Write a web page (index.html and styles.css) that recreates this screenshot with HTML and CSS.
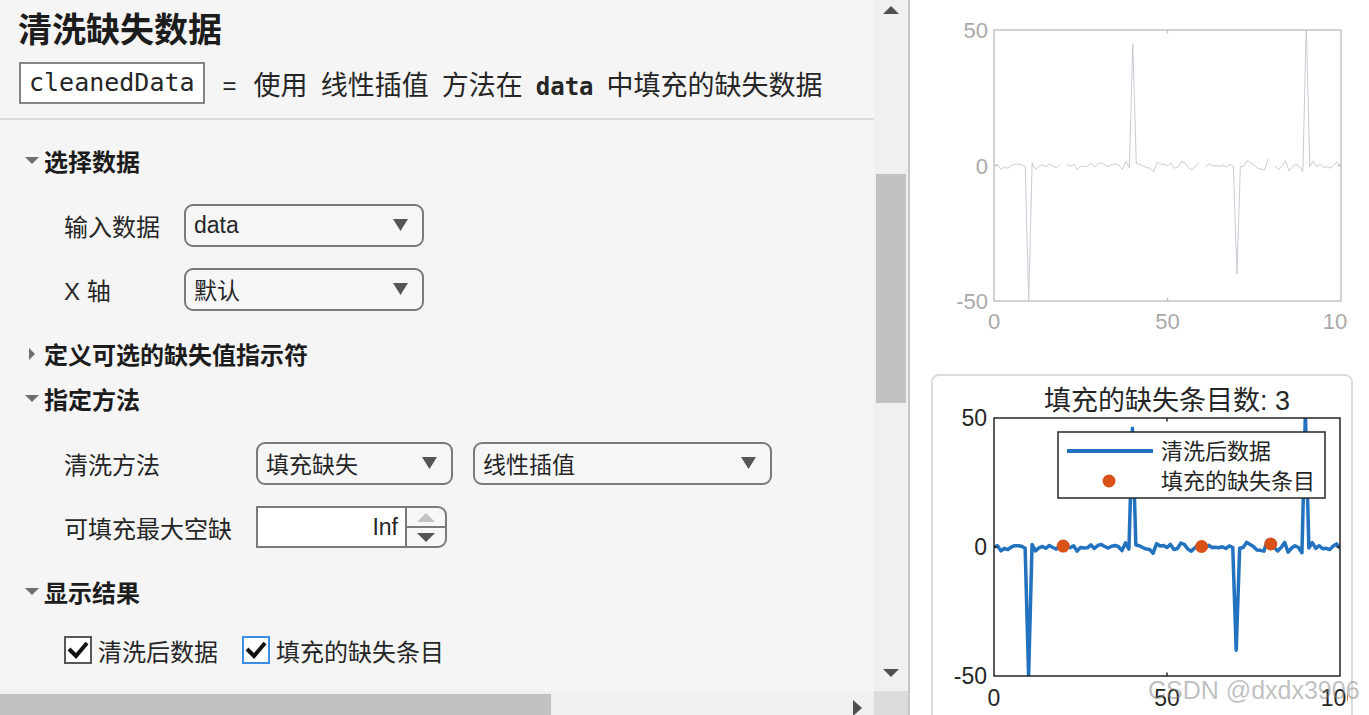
FILE: index.html
```html
<!DOCTYPE html>
<html lang="zh">
<head>
<meta charset="utf-8">
<title>清洗缺失数据</title>
<link rel="stylesheet" href="styles.css">
</head>
<body>
<div class="app">
  <div class="editor">
    <div class="editor-main">
      <div class="content">
        <div class="header">
          <h1 class="title">清洗缺失数据</h1>
          <div class="summary">
            <span class="var-box">cleanedData</span>
            <span class="eq">=</span>
            <span class="sum-text">使用 线性插值 方法在 <b class="code">data</b> 中填充的缺失数据</span>
          </div>
        </div>
        <div class="sections">
          <section class="sec">
            <div class="sec-head"><span class="tri-down"></span>选择数据</div>
            <div class="sec-body">
              <div class="row">
                <span class="label label-a">输入数据</span>
                <div class="dd dd-240"><span>data</span><svg class="dd-arrow" width="15" height="12" viewBox="0 0 15 12"><polygon points="0,0 15,0 7.5,12"/></svg></div>
              </div>
              <div class="row">
                <span class="label label-a">X 轴</span>
                <div class="dd dd-240"><span>默认</span><svg class="dd-arrow" width="15" height="12" viewBox="0 0 15 12"><polygon points="0,0 15,0 7.5,12"/></svg></div>
              </div>
            </div>
          </section>
          <section class="sec">
            <div class="sec-head"><span class="tri-right"></span>定义可选的缺失值指示符</div>
          </section>
          <section class="sec">
            <div class="sec-head"><span class="tri-down"></span>指定方法</div>
            <div class="sec-body">
              <div class="row">
                <span class="label label-b">清洗方法</span>
                <div class="dd dd-197"><span>填充缺失</span><svg class="dd-arrow" width="15" height="12" viewBox="0 0 15 12"><polygon points="0,0 15,0 7.5,12"/></svg></div>
                <div class="dd dd-299"><span>线性插值</span><svg class="dd-arrow" width="15" height="12" viewBox="0 0 15 12"><polygon points="0,0 15,0 7.5,12"/></svg></div>
              </div>
              <div class="row">
                <span class="label label-b">可填充最大空缺</span>
                <div class="spin">
                  <div class="spin-field">Inf</div>
                  <div class="spin-btns">
                    <div class="spin-btn"><svg width="18" height="9" viewBox="0 0 18 9"><polygon points="0,9 18,9 9,0" class="arrow-off"/></svg></div>
                    <div class="spin-btn spin-btn-down"><svg width="18" height="9" viewBox="0 0 18 9"><polygon points="0,0 18,0 9,9" class="arrow-on"/></svg></div>
                  </div>
                </div>
              </div>
            </div>
          </section>
          <section class="sec">
            <div class="sec-head"><span class="tri-down"></span>显示结果</div>
            <div class="sec-body">
              <div class="row row-cb">
                <span class="cb"><svg width="24" height="24" viewBox="0 0 24 24"><path d="M3 11 L10 18 L21 5" /></svg></span>
                <span class="cb-label">清洗后数据</span>
                <span class="cb cb-focus"><svg width="24" height="24" viewBox="0 0 24 24"><path d="M3 11 L10 18 L21 5" /></svg></span>
                <span class="cb-label">填充的缺失条目</span>
              </div>
            </div>
          </section>
        </div>
      </div>
      <div class="vscroll">
        <div class="vs-up"><svg width="16" height="8" viewBox="0 0 16 8"><polygon points="0,8 16,8 8,0"/></svg></div>
        <div class="vs-thumb"></div>
        <div class="vs-fill"></div>
        <div class="vs-down"><svg width="16" height="8" viewBox="0 0 16 8"><polygon points="0,0 16,0 8,8"/></svg></div>
      </div>
    </div>
    <div class="editor-bottom">
      <div class="hscroll">
        <div class="hs-thumb"></div>
        <div class="hs-fill"></div>
        <div class="hs-right"><svg width="9" height="16" viewBox="0 0 9 16"><polygon points="0,0 9,8 0,16"/></svg></div>
      </div>
      <div class="corner"></div>
    </div>
  </div>
  <div class="divider"></div>
  <div class="figure">
    <svg class="plot-top" width="438" height="340" viewBox="0 0 438 340">
      <svg x="84" y="30" width="347" height="271" viewBox="0 -50 100 100" preserveAspectRatio="none">
        <g fill="none" stroke="#c6ccd4" stroke-width="1">
          <polyline vector-effect="non-scaling-stroke" points="0,0 1,-0.5 2,1.5 3,0.5 4,1 5,0 6,-0.5 7,-0.5 8,-0.3 9,0.5 10,50 11,-1 12,1.5 13,0.3 14,-0.2 15,0.5 16,-0.6 17,0.2 18,0.8 19,-0.3"/>
          <polyline vector-effect="non-scaling-stroke" points="21,-0.4 22,0.3 23,-0.5 24,1.6 25,0.2 26,0.4 27,0.3 28,-0.8 29,0.6 30,-0.6 31,-1 32,-0.2 33,0.4 34,-0.3 35,-0.6 36,-0.1 37,1.4 38,-1.6 39,0.8 40,-45 41,-0.8 42,-0.5 43,0.2 44,0.8 45,1 46,2.4 47,-1.3 48,-0.4 49,-0.6 50,0.2 51,-1 52,1 53,0.6 54,-1.5 55,-1 56,0.8 57,1.6 58,0.4 59,-0.9"/>
          <polyline vector-effect="non-scaling-stroke" points="61,0.5 62,-0.7 63,0.2 64,0.1 65,0.3 66,-0.1 67,0.6 68,-0.4 69,0.2 70,40 71,0.5 72,0.2 73,-1.8 74,-1 75,-0.2 76,1.2 77,1.3 78,1.6 79,-2.5"/>
          <polyline vector-effect="non-scaling-stroke" points="81,0.2 82,1.5 83,0.2 84,-1.8 85,2 86,0.4 87,-0.5 88,0.2 89,2.2 90,-52 91,0.4 92,-1.7 93,0.5 94,-0.5 95,0.7 96,0.5 97,1 98,-0.3 99,-1.2 100,0.5"/>
        </g>
      </svg>
      <rect x="84" y="30" width="347" height="271" fill="none" stroke="#c4c4c4" stroke-width="1.5"/>
      <g stroke="#c4c4c4" stroke-width="1.5">
        <line x1="257.5" y1="30" x2="257.5" y2="33.5"/>
        <line x1="257.5" y1="301" x2="257.5" y2="297.5"/>
        <line x1="84" y1="165.5" x2="87.5" y2="165.5"/>
        <line x1="431" y1="165.5" x2="427.5" y2="165.5"/>
      </g>
      <g class="tick-top" text-anchor="end">
        <text x="78" y="38">50</text>
        <text x="78" y="173.5">0</text>
        <text x="78" y="309">-50</text>
      </g>
      <g class="tick-top" text-anchor="middle">
        <text x="84" y="329">0</text>
        <text x="257.5" y="329">50</text>
        <text x="431" y="329">100</text>
      </g>
    </svg>
    <div class="plot-card">
      <svg class="plot-bottom" width="415" height="340" viewBox="0 0 415 340">
        <text class="plot-title" x="234" y="34" text-anchor="middle">填充的缺失条目数: 3</text>
        <svg x="61" y="42" width="346" height="258" viewBox="0 -50 100 100" preserveAspectRatio="none">
          <polyline fill="none" stroke="#2372bf" stroke-width="3.5" stroke-linejoin="round" vector-effect="non-scaling-stroke" points="0,0 1,-0.5 2,1.5 3,0.5 4,1 5,0 6,-0.5 7,-0.5 8,-0.3 9,0.5 10,50 11,-1 12,1.5 13,0.3 14,-0.2 15,0.5 16,-0.6 17,0.2 18,0.8 19,-0.3 20,-0.35 21,-0.4 22,0.3 23,-0.5 24,1.6 25,0.2 26,0.4 27,0.3 28,-0.8 29,0.6 30,-0.6 31,-1 32,-0.2 33,0.4 34,-0.3 35,-0.6 36,-0.1 37,1.4 38,-1.6 39,0.8 40,-46 41,-0.8 42,-0.5 43,0.2 44,0.8 45,1 46,2.4 47,-1.3 48,-0.4 49,-0.6 50,0.2 51,-1 52,1 53,0.6 54,-1.5 55,-1 56,0.8 57,1.6 58,0.4 59,-0.9 60,-0.2 61,0.5 62,-0.7 63,0.2 64,0.1 65,0.3 66,-0.1 67,0.6 68,-0.4 69,0.2 70,40 71,0.5 72,0.2 73,-1.8 74,-1 75,-0.2 76,1.2 77,1.3 78,1.6 79,-2.5 80,-1.15 81,0.2 82,1.5 83,0.2 84,-1.8 85,2 86,0.4 87,-0.5 88,0.2 89,2.2 90,-52 91,0.4 92,-1.7 93,0.5 94,-0.5 95,0.7 96,0.5 97,1 98,-0.3 99,-1.2 100,0.5"/>
        </svg>
        <g fill="#d95319">
          <circle cx="130.2" cy="170.1" r="6.5"/>
          <circle cx="268.6" cy="170.5" r="6.5"/>
          <circle cx="337.8" cy="168" r="6.5"/>
        </g>
        <rect x="61" y="42" width="346" height="258" fill="none" stroke="#262626" stroke-width="1.5"/>
        <g stroke="#262626" stroke-width="1.5">
          <line x1="234" y1="42" x2="234" y2="45.5"/>
          <line x1="234" y1="300" x2="234" y2="296.5"/>
          <line x1="61" y1="171" x2="64.5" y2="171"/>
          <line x1="407" y1="171" x2="403.5" y2="171"/>
        </g>
        <rect x="125" y="56" width="267" height="66" fill="#ffffff" stroke="#262626" stroke-width="1.5"/>
        <line x1="134" y1="75" x2="220" y2="75" stroke="#2372bf" stroke-width="4"/>
        <circle cx="176" cy="105" r="6.5" fill="#d95319"/>
        <g class="legend-text">
          <text x="228" y="83">清洗后数据</text>
          <text x="228" y="113">填充的缺失条目</text>
        </g>
        <g class="tick-bottom" text-anchor="end">
          <text x="54" y="50">50</text>
          <text x="54" y="179">0</text>
          <text x="54" y="308">-50</text>
        </g>
        <g class="tick-bottom" text-anchor="middle">
          <text x="61" y="330">0</text>
          <text x="234" y="330">50</text>
          <text x="407" y="330">100</text>
        </g>
      </svg>
    </div>
    <div class="watermark">CSDN @dxdx3906</div>
  </div>
</div>
</body>
</html>
```

FILE: styles.css
```css
* { box-sizing: border-box; }
html, body { margin: 0; padding: 0; }
body {
  width: 1369px;
  height: 715px;
  overflow: hidden;
  font-family: "Liberation Sans", "Noto Sans CJK SC", sans-serif;
  color: #262626;
  background: #ffffff;
}
.app { display: flex; width: 1369px; height: 715px; }

.editor { width: 908px; height: 715px; display: flex; flex-direction: column; }
.editor-main { display: flex; height: 691px; }
.content { width: 874px; height: 691px; background: #f5f5f5; overflow: hidden; }

.header {
  height: 120px;
  padding: 8px 18px 0;
  border-bottom: 2px solid #dadada;
}
.title {
  margin: 0;
  font-family: "Noto Sans CJK SC", sans-serif;
  font-size: 34px;
  font-weight: 700;
  line-height: 40px;
  color: #1c1c1c;
}
.summary { display: flex; align-items: center; margin-top: 13px; margin-left: 1px; }
.var-box {
  height: 42px;
  padding: 0 8px;
  border: 2px solid #858585;
  background: #ffffff;
  font-family: "DejaVu Sans Mono", monospace;
  font-size: 25px;
  line-height: 38px;
  color: #262626;
}
.eq { font-size: 24px; margin: 6px 17px 0 18px; color: #262626; }
.sum-text {
  font-family: "Noto Sans CJK SC", sans-serif;
  font-size: 27px;
  line-height: 34px;
  word-spacing: 7px;
  margin-top: 6px;
  color: #262626;
}
.code { font-family: "DejaVu Sans Mono", monospace; font-weight: 700; font-size: 24px; word-spacing: 0; }

.sections { padding-top: 18px; }
.sec-head {
  height: 45px;
  display: flex;
  align-items: center;
  padding-left: 25px;
  font-family: "Noto Sans CJK SC", sans-serif;
  font-size: 24px;
  font-weight: 700;
  color: #1c1c1c;
}
.tri-down {
  width: 0; height: 0;
  border-left: 7px solid transparent;
  border-right: 7px solid transparent;
  border-top: 7px solid #6e6e6e;
  margin-right: 5px;
}
.tri-right {
  width: 0; height: 0;
  border-top: 6px solid transparent;
  border-bottom: 6px solid transparent;
  border-left: 6px solid #6e6e6e;
  margin-left: 4px;
  margin-right: 9px;
}
.sec-body { padding: 10px 0; }
.row { height: 64px; display: flex; align-items: center; padding-left: 64px; }
.label { font-size: 24px; color: #262626; }
.label-a { width: 120px; }
.label-b { width: 192px; }

.dd {
  height: 43px;
  border: 2px solid #7a7a7a;
  border-radius: 9px;
  display: flex;
  align-items: center;
  justify-content: space-between;
  padding: 0 14px 0 8px;
  font-size: 23px;
  color: #262626;
  background: #f6f6f6;
}
.dd-240 { width: 240px; }
.dd-197 { width: 197px; }
.dd-299 { width: 299px; margin-left: 20px; }
.dd-arrow { fill: #555555; flex: none; }

.spin { display: flex; width: 191px; height: 42px; }
.spin-field {
  flex: 1;
  background: #ffffff;
  border: 2px solid #7a7a7a;
  border-right: none;
  text-align: right;
  padding-right: 7px;
  font-size: 23px;
  line-height: 38px;
  color: #262626;
}
.spin-btns {
  width: 42px;
  border: 2px solid #7a7a7a;
  border-radius: 0 9px 9px 0;
  display: flex;
  flex-direction: column;
  background: #f7f7f7;
}
.spin-btn { flex: 1; display: flex; align-items: center; justify-content: center; }
.spin-btn-down { border-top: 2px solid #7a7a7a; }
.arrow-off { fill: #c4c4c4; }
.arrow-on { fill: #555555; }

.row-cb { height: 52px; }
.cb {
  width: 28px; height: 28px;
  border: 2px solid #575757;
  background: #ffffff;
  display: flex; align-items: center; justify-content: center;
}
.cb svg path { fill: none; stroke: #111111; stroke-width: 4; stroke-linejoin: miter; }
.cb-focus { border-color: #3b8ee4; margin-left: 24px; }
.cb-label { font-size: 24px; margin-left: 6px; color: #262626; }

.vscroll { width: 34px; height: 691px; background: #f0f0f0; display: flex; flex-direction: column; align-items: center; }
.vs-up { height: 20px; padding-top: 6px; }
.vs-up svg, .vs-down svg, .hs-right svg { display: block; fill: #505050; }
.vs-thumb { width: 30px; height: 229px; margin-top: 154px; background: #c1c1c1; }
.vs-fill { flex: 1; }
.vs-down { height: 22px; padding-bottom: 14px; }

.editor-bottom { display: flex; height: 24px; }
.hscroll { width: 874px; height: 24px; background: #f0f0f0; display: flex; }
.hs-thumb { width: 551px; height: 21px; margin-top: 3px; background: #c1c1c1; }
.hs-fill { flex: 1; }
.hs-right { width: 21px; padding-top: 9px; }
.corner { width: 34px; height: 24px; background: #dcdcdc; }

.divider { width: 2px; height: 715px; background: #c6c6c6; }

.figure { position: relative; flex: 1; height: 715px; background: #ffffff; overflow: hidden; }
.plot-top { display: block; }
.tick-top { font-family: "Liberation Sans", sans-serif; font-size: 22px; fill: #a9a9a9; }
.plot-card {
  margin: 34px 0 0 21px;
  width: 422px;
  height: 380px;
  border: 2px solid #dcdcdc;
  border-radius: 8px;
  overflow: hidden;
}
.plot-bottom { display: block; }
.plot-title { font-family: "Liberation Sans", "Noto Sans CJK SC", sans-serif; font-size: 27px; fill: #262626; }
.legend-text { font-family: "Noto Sans CJK SC", sans-serif; font-size: 22px; fill: #262626; }
.tick-bottom { font-family: "Liberation Sans", sans-serif; font-size: 23px; fill: #262626; }

.watermark {
  position: absolute;
  left: 238px;
  top: 676px;
  font-family: "Liberation Sans", sans-serif;
  font-size: 25px;
  color: rgba(130, 130, 130, 0.5);
  white-space: nowrap;
}
```
